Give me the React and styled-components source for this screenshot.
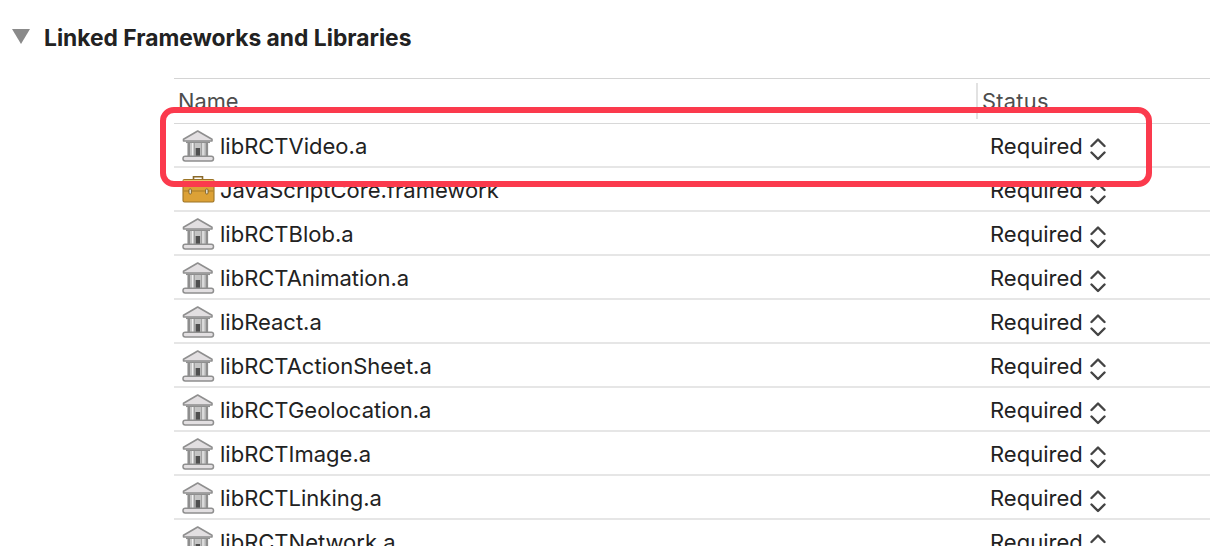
import React from "react";
import styled, { createGlobalStyle } from "styled-components";

const Global = createGlobalStyle`
  html, body { margin: 0; padding: 0; background: #fff; width: 1210px; height: 546px; overflow: hidden; }
  #root { width: 1210px; height: 546px; overflow: hidden; }
`;

const Page = styled.div`
  position: relative;
  width: 1210px;
  height: 546px;
  overflow: hidden;
  background: #fff;
  font-family: Inter, "Liberation Sans", sans-serif;
  color: #1f1f1f;
`;

const Section = styled.div`
  display: flex;
  align-items: center;
  height: 78px;
  padding: 0 0 2px 12px;
  box-sizing: border-box;
`;

const Disclosure = styled.div`
  width: 0;
  height: 0;
  border-left: 9px solid transparent;
  border-right: 9px solid transparent;
  border-top: 15px solid #8a8a8a;
  margin-right: 14px;
  margin-bottom: 3px;
`;

const Title = styled.h2`
  margin: 0 0 2px;
  font-size: 22.8px;
  font-weight: 700;
  color: #222;
`;

const Table = styled.div`
  margin-left: 174px;
  border-top: 1px solid #d4d4d4;
`;

const HeaderRow = styled.div`
  display: flex;
  height: 44px;
  border-bottom: 1px solid #d8d8d8;
  font-size: 21.8px;
  color: #4d4d4d;
`;

const NameHead = styled.div`
  width: 802px;
  padding: 9px 0 0 4px;
  box-sizing: border-box;
`;

const StatusHead = styled.div`
  flex: 1;
  margin-top: 4px;
  height: 36px;
  padding: 5px 0 0 4px;
  border-left: 2px solid #e2e2e2;
  box-sizing: border-box;
  letter-spacing: 0.3px;
`;

const Row = styled.div`
  display: flex;
  align-items: center;
  height: 44px;
  box-sizing: border-box;
  border-bottom: 2px solid #e6e6e6;
`;

const NameCell = styled.div`
  display: flex;
  align-items: center;
  width: 816px;
  padding-left: 8px;
  box-sizing: border-box;
  font-size: 22px;
  color: #222;
  gap: 4px;
`;

const IconSlot = styled.span`
  display: flex;
  width: 34px;
  height: 32px;
  flex: none;
  margin-top: 2px;
`;

const CellText = styled.span`
  margin-top: 2px;
`;

const StatusCell = styled.div`
  display: flex;
  align-items: center;
  font-size: 22px;
  color: #222;
  gap: 7px;
`;

const StepperSlot = styled.span`
  display: flex;
  margin-top: 7px;
`;

const Highlight = styled.div`
  position: absolute;
  left: 160px;
  top: 107px;
  width: 992px;
  height: 80px;
  box-sizing: border-box;
  border: 6.5px solid #fb3a4d;
  border-radius: 14px;
`;

const LibIcon = () => (
  <svg width="34" height="32" viewBox="0 0 34 32">
    <path d="M15.7 1 L30 9.2 V11 H1.5 V9.2 Z" fill="#e2dfe1" stroke="#8f8f8f" strokeWidth="1.6" strokeLinejoin="round" />
    <rect x="4" y="11.5" width="24" height="1.6" fill="#8f8f8f" />
    <rect x="5" y="13" width="22" height="13" fill="#f1f1f1" />
    <rect x="5.5" y="13" width="2.5" height="13" fill="#8e8e8e" />
    <rect x="8" y="13" width="2" height="13" fill="#c6c6c6" />
    <rect x="11.5" y="13" width="1.6" height="13" fill="#a2a2a2" />
    <rect x="13.1" y="13" width="5.6" height="5" fill="#c4c4c4" />
    <rect x="13.5" y="18" width="4.8" height="8" fill="#4f4f4f" />
    <rect x="18.7" y="13" width="1.6" height="13" fill="#a2a2a2" />
    <rect x="21.5" y="13" width="2" height="13" fill="#c6c6c6" />
    <rect x="23.5" y="13" width="2.5" height="13" fill="#8e8e8e" />
    <rect x="1" y="26.2" width="30.5" height="4.8" rx="2.2" fill="#e2dfe1" stroke="#8f8f8f" strokeWidth="1.5" />
  </svg>
);

const KitIcon = () => (
  <svg width="34" height="32" viewBox="0 0 34 32">
    <path d="M11.5 6 V2.8 H20.5 V6" fill="none" stroke="#8a6a2a" strokeWidth="1.6" />
    <rect x="1" y="5.5" width="31" height="22.5" rx="1.5" fill="#dca136" stroke="#9c7426" strokeWidth="1.1" />
    <rect x="1.6" y="6.1" width="29.8" height="2.4" fill="#edc26d" />
    <rect x="1.6" y="16.5" width="29.8" height="1" fill="#a87c28" />
    <rect x="7" y="15" width="2.4" height="5" rx="1" fill="#e9e4d4" stroke="#6e5320" strokeWidth=".8" />
    <rect x="23.6" y="15" width="2.4" height="5" rx="1" fill="#e9e4d4" stroke="#6e5320" strokeWidth=".8" />
  </svg>
);

const Stepper = () => (
  <svg width="16" height="24" viewBox="0 0 16 24" fill="none" stroke="#444" strokeWidth="2.4" strokeLinecap="round" strokeLinejoin="round">
    <path d="M1.5 9 L8 2.5 L14.5 9" />
    <path d="M1.5 15.5 L8 22 L14.5 15.5" />
  </svg>
);

const names = [
  ["libRCTVideo.a", "lib"],
  ["JavaScriptCore.framework", "kit"],
  ["libRCTBlob.a", "lib"],
  ["libRCTAnimation.a", "lib"],
  ["libReact.a", "lib"],
  ["libRCTActionSheet.a", "lib"],
  ["libRCTGeolocation.a", "lib"],
  ["libRCTImage.a", "lib"],
  ["libRCTLinking.a", "lib"],
  ["libRCTNetwork.a", "lib"],
];

export default function App() {
  return (
    <Page>
      <Global />
      <Section>
        <Disclosure />
        <Title>Linked Frameworks and Libraries</Title>
      </Section>
      <Table>
        <HeaderRow>
          <NameHead>Name</NameHead>
          <StatusHead>Status</StatusHead>
        </HeaderRow>
        {names.map(([n, kind]) => (
          <Row key={n}>
            <NameCell>
              <IconSlot>{kind === "lib" ? <LibIcon /> : <KitIcon />}</IconSlot>
              <CellText>{n}</CellText>
            </NameCell>
            <StatusCell>
              <CellText>Required</CellText>
              <StepperSlot><Stepper /></StepperSlot>
            </StatusCell>
          </Row>
        ))}
      </Table>
      <Highlight />
    </Page>
  );
}
